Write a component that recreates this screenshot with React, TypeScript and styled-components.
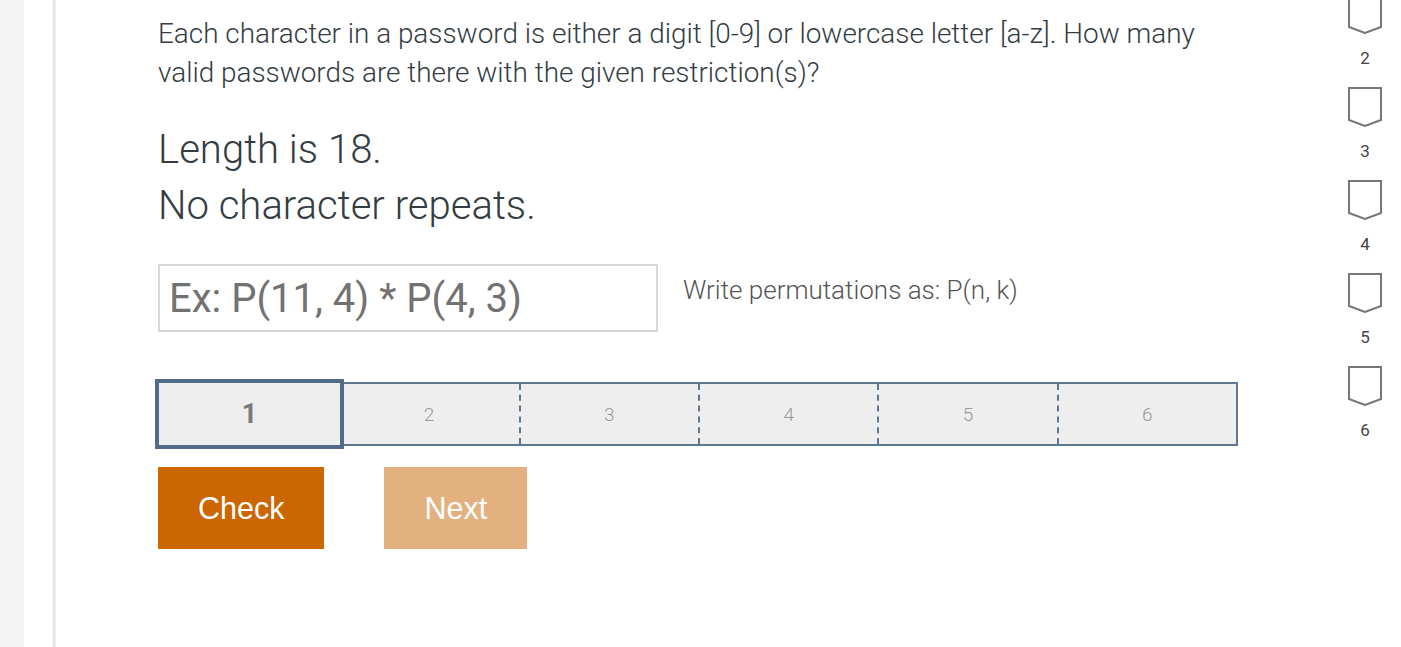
import React from "react";
import styled, { createGlobalStyle } from "styled-components";

const Global = createGlobalStyle`
  html, body { margin: 0; padding: 0; background: #fff; }
  body { font-family: Roboto, "Noto Sans", sans-serif; overflow: hidden; }
`;

const Page = styled.div`
  display: flex;
  width: 1401px;
  height: 647px;
  overflow: hidden;
`;

const LeftStrip = styled.div`
  width: 24px;
  flex: none;
  background: #f3f3f3;
`;

const LeftGap = styled.div`
  width: 28px;
  flex: none;
  background: #fff;
`;

const Shadow = styled.div`
  width: 4px;
  flex: none;
  background: linear-gradient(to right, #f4f4f4, #e6e6e6 60%, #f2f2f2);
`;

const Main = styled.main`
  flex: 1;
  padding: 14px 0 0 102px;
  color: #343d43;
  font-weight: 300;
`;

const Prompt = styled.p`
  margin: 0;
  font-size: 27.9px;
  line-height: 39px;
  width: 1080px;
`;

const Restrictions = styled.div`
  margin-top: 30px;
  font-size: 40.1px;
  line-height: 56px;
`;

const AnswerRow = styled.div`
  display: flex;
  align-items: flex-start;
  margin-top: 30px;
  gap: 25px;
`;

const Input = styled.div`
  box-sizing: border-box;
  width: 500px;
  height: 68px;
  border: 2px solid #d3d8da;
  padding: 0 0 0 9px;
  display: flex;
  align-items: center;
  font-size: 40px;
  font-weight: 400;
  color: #727272;
`;

const Hint = styled.div`
  padding-top: 11px;
  font-size: 26px;
  color: #555;
`;

const Progress = styled.div`
  margin-top: 50px;
  box-sizing: border-box;
  width: 1080px;
  height: 64px;
  border: 2px solid #5f7891;
  background: #eeeeee;
  display: flex;
  position: relative;
`;

const Segment = styled.div<{ $first?: boolean }>`
  box-sizing: border-box;
  width: 180px;
  display: flex;
  align-items: center;
  justify-content: center;
  font-size: 19px;
  color: #999;
  border-left: ${(p) => (p.$first ? "none" : "2px dashed #5f7891")};
  &:nth-child(2) { border-left: none; }
`;

const Current = styled.div`
  position: absolute;
  left: -5px;
  top: -5px;
  width: 189px;
  height: 70px;
  box-sizing: border-box;
  border: 4px solid #536a89;
  background: #eeeeee;
  display: flex;
  align-items: center;
  justify-content: center;
  font-size: 27px;
  font-weight: 700;
  color: #7a7a7a;
`;

const Buttons = styled.div`
  display: flex;
  gap: 60px;
  margin-top: 21px;
`;

const Button = styled.button<{ $dim?: boolean }>`
  height: 82px;
  padding: 0 40px;
  border: none;
  background: ${(p) => (p.$dim ? "#e3b17f" : "#cc6600")};
  color: #fff;
  font-family: "Liberation Sans", Arial, sans-serif;
  font-size: 30.5px;
  cursor: pointer;
`;

const Side = styled.aside`
  width: 70px;
  flex: none;
  display: flex;
  flex-direction: column;
  align-items: center;
  margin-top: -7px;
  padding-right: 1px;
`;

const Item = styled.div`
  display: flex;
  flex-direction: column;
  align-items: center;
  height: 93px;
`;

const Label = styled.div`
  font-size: 17px;
  color: #444;
  margin-top: 14px;
  font-family: Roboto, sans-serif;
`;

const Flag = () => (
  <svg width="36" height="41" viewBox="0 0 36 41">
    <path d="M2 2 H34 V34 L18 40 L2 34 Z" fill="none" stroke="#777" strokeWidth="2" />
  </svg>
);

export default function App() {
  return (
    <>
      <Global />
      <Page>
        <LeftStrip />
        <LeftGap />
        <Shadow />
        <Main>
          <Prompt>
            Each character in a password is either a digit [0-9] or lowercase letter [a-z]. How many valid
            passwords are there with the given restriction(s)?
          </Prompt>
          <Restrictions>
            <div>Length is 18.</div>
            <div>No character repeats.</div>
          </Restrictions>
          <AnswerRow>
            <Input>Ex: P(11, 4) * P(4, 3)</Input>
            <Hint>Write permutations as: P(n, k)</Hint>
          </AnswerRow>
          <Progress>
            {[1, 2, 3, 4, 5, 6].map((n) => (
              <Segment key={n} $first={n === 1}>{n === 1 ? "" : n}</Segment>
            ))}
            <Current>1</Current>
          </Progress>
          <Buttons>
            <Button>Check</Button>
            <Button $dim>Next</Button>
          </Buttons>
        </Main>
        <Side>
          {[2, 3, 4, 5, 6].map((n) => (
            <Item key={n}>
              <Flag />
              <Label>{n}</Label>
            </Item>
          ))}
        </Side>
      </Page>
    </>
  );
}
